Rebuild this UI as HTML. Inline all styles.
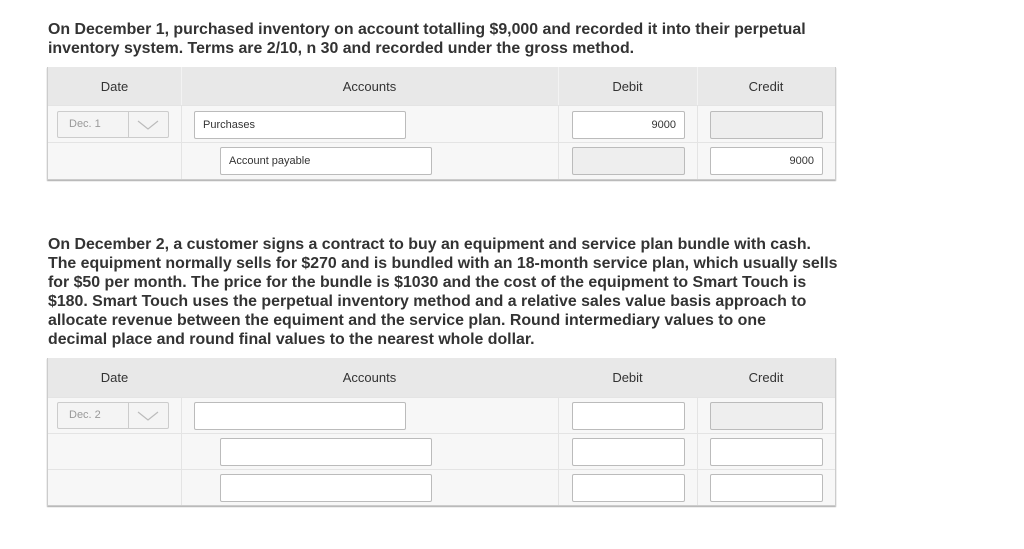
<!DOCTYPE html>
<html><head><meta charset="utf-8"><style>
body{margin:0;width:1024px;height:549px;background:#fff;font-family:"Liberation Sans",sans-serif;position:relative;overflow:hidden}
.p{position:absolute;left:48px;font-weight:bold;font-size:15.9px;line-height:19px;color:#333;white-space:nowrap}
.t{position:absolute;left:47px;width:787px;border:1px solid #ccc;border-top:none;box-shadow:0 1px 1px #aaa;background:#f7f7f7}
.h{height:38px;background:#e8e8e8;position:relative;font-size:13px;color:#333}
.h span{position:absolute;top:12px;text-align:center}
.r{position:relative;border-top:1px solid #e4e4e4}
.v{position:absolute;top:0;bottom:0;width:1px;background:#e4e4e4}
.in{position:absolute;height:26px;border:1px solid #bbb;border-radius:2px;background:#fff;font-size:11px;color:#333;box-sizing:border-box;line-height:26px;padding:0 8px}
.g{background:#eee}
.num{text-align:right}
.sel{position:absolute;left:9px;width:112px;height:27px;border:1px solid #ccc;border-radius:2px;background:#f4f4f4;box-sizing:border-box;font-size:11px;color:#999;line-height:25px;padding-left:11px}
.sel i{position:absolute;left:70px;top:0;bottom:0;width:1px;background:#ccc}
.sel svg{position:absolute;left:79px;top:8px}
</style></head><body>
<div class="p" style="top:20px">On December 1, purchased inventory on account totalling $9,000 and recorded it into their perpetual<br>inventory system. Terms are 2/10, n 30 and recorded under the gross method.</div>

<div class="t" style="top:67px">
<div class="h"><span style="left:0;width:133px">Date</span><span style="left:133px;width:377px">Accounts</span><span style="left:510px;width:139px">Debit</span><span style="left:649px;width:138px">Credit</span>
<div class="v" style="left:133px;background:#f3f3f3"></div><div class="v" style="left:510px;background:#f3f3f3"></div><div class="v" style="left:649px;background:#f3f3f3"></div></div>
<div class="r" style="height:36px"><div class="v" style="left:133px"></div><div class="v" style="left:510px"></div><div class="v" style="left:649px"></div>
<div class="sel" style="top:5px">Dec. 1<i></i><svg width="22" height="10"><path d="M1 1L11 9L21 1" fill="none" stroke="#bbb" stroke-width="1.2"/></svg></div>
<div class="in" style="left:146px;top:5px;width:212px;height:28px">Purchases</div>
<div class="in num" style="left:524px;top:5px;width:113px;height:28px">9000</div>
<div class="in g" style="left:662px;top:5px;width:113px;height:28px"></div></div>
<div class="r" style="height:36px"><div class="v" style="left:133px"></div><div class="v" style="left:510px"></div><div class="v" style="left:649px"></div>
<div class="in" style="left:172px;top:4px;width:212px;height:28px">Account payable</div>
<div class="in g" style="left:524px;top:4px;width:113px;height:28px"></div>
<div class="in num" style="left:662px;top:4px;width:113px;height:28px">9000</div></div>
</div>

<div class="p" style="top:235px">On December 2, a customer signs a contract to buy an equipment and service plan bundle with cash.<br>The equipment normally sells for $270 and is bundled with an 18-month service plan, which usually sells<br>for $50 per month. The price for the bundle is $1030 and the cost of the equipment to Smart Touch is<br>$180. Smart Touch uses the perpetual inventory method and a relative sales value basis approach to<br>allocate revenue between the equiment and the service plan. Round intermediary values to one<br>decimal place and round final values to the nearest whole dollar.</div>

<div class="t" style="top:358px">
<div class="h" style="height:39px"><span style="left:0;width:133px">Date</span><span style="left:133px;width:377px">Accounts</span><span style="left:510px;width:139px">Debit</span><span style="left:649px;width:138px">Credit</span></div>
<div class="r" style="height:35px"><div class="v" style="left:133px"></div><div class="v" style="left:510px"></div><div class="v" style="left:649px"></div>
<div class="sel" style="top:4px">Dec. 2<i></i><svg width="22" height="10"><path d="M1 1L11 9L21 1" fill="none" stroke="#bbb" stroke-width="1.2"/></svg></div>
<div class="in" style="left:146px;top:4px;width:212px;height:28px"></div>
<div class="in" style="left:524px;top:4px;width:113px;height:28px"></div>
<div class="in g" style="left:662px;top:4px;width:113px;height:28px"></div></div>
<div class="r" style="height:35px"><div class="v" style="left:133px"></div><div class="v" style="left:510px"></div><div class="v" style="left:649px"></div>
<div class="in" style="left:172px;top:4px;width:212px;height:28px"></div>
<div class="in" style="left:524px;top:4px;width:113px;height:28px"></div>
<div class="in" style="left:662px;top:4px;width:113px;height:28px"></div></div>
<div class="r" style="height:35px"><div class="v" style="left:133px"></div><div class="v" style="left:510px"></div><div class="v" style="left:649px"></div>
<div class="in" style="left:172px;top:4px;width:212px;height:28px"></div>
<div class="in" style="left:524px;top:4px;width:113px;height:28px"></div>
<div class="in" style="left:662px;top:4px;width:113px;height:28px"></div></div>
</div>
</body></html>
